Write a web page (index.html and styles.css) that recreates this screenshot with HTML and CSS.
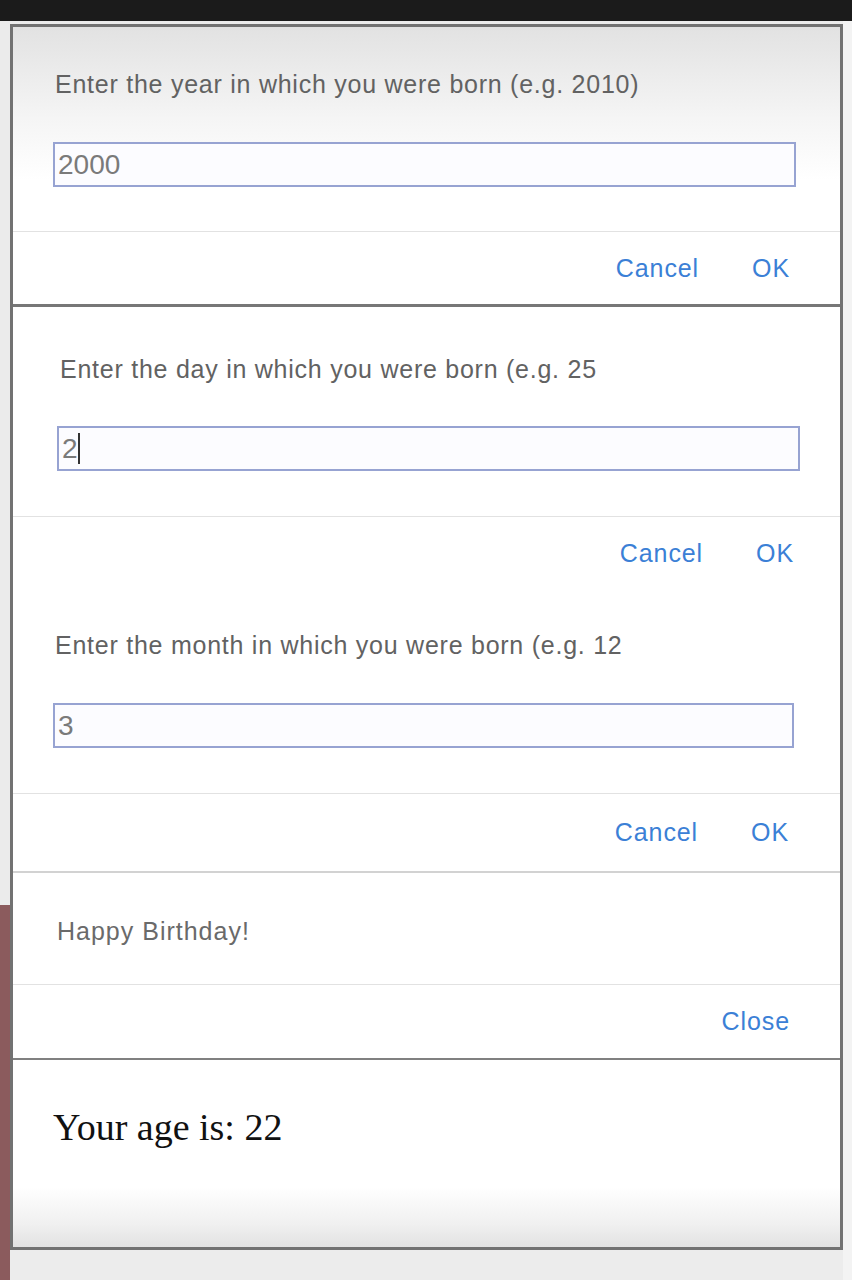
FILE: index.html
```html
<!DOCTYPE html>
<html lang="en">
<head>
<meta charset="utf-8">
<title>Age calculator</title>
<link rel="stylesheet" href="styles.css">
</head>
<body>
<div class="topbar"></div>
<div class="stage">
  <div class="side-left">
    <div class="sl-top"></div>
    <div class="sl-bottom"></div>
  </div>
  <div class="frame">
    <section class="dialog d1">
      <div class="body">
        <p class="msg">Enter the year in which you were born (e.g. 2010)</p>
        <div class="field">2000</div>
      </div>
      <div class="actions">
        <span class="btn">Cancel</span>
        <span class="btn">OK</span>
      </div>
    </section>
    <section class="dialog d2">
      <div class="body">
        <p class="msg">Enter the day in which you were born (e.g. 25</p>
        <div class="field">2<span class="caret"></span></div>
      </div>
      <div class="actions">
        <span class="btn">Cancel</span>
        <span class="btn">OK</span>
      </div>
    </section>
    <section class="dialog d3">
      <div class="body">
        <p class="msg">Enter the month in which you were born (e.g. 12</p>
        <div class="field">3</div>
      </div>
      <div class="actions">
        <span class="btn">Cancel</span>
        <span class="btn">OK</span>
      </div>
    </section>
    <section class="dialog d4">
      <div class="body">
        <p class="msg small">Happy Birthday!</p>
      </div>
      <div class="actions">
        <span class="btn">Close</span>
      </div>
    </section>
    <div class="page">
      <p class="age">Your age is: 22</p>
    </div>
  </div>
  <div class="side-right"></div>
</div>
</body>
</html>
```
FILE: styles.css
```css
* { box-sizing: border-box; }
html, body { margin: 0; padding: 0; }
body {
  width: 852px;
  height: 1280px;
  overflow: hidden;
  background: #ececec;
  font-family: "Liberation Sans", Arial, sans-serif;
}
.topbar {
  height: 21px;
  background: #1b1b1b;
}
.stage {
  display: flex;
  align-items: stretch;
  height: 1259px;
}
.side-left {
  width: 10px;
  display: flex;
  flex-direction: column;
}
.sl-top { height: 884px; background: #ebebeb; }
.sl-bottom { flex: 1; background: #8b5b5d; }
.side-right {
  width: 9px;
  background: #f3f3f3;
}
.frame {
  width: 833px;
  margin-top: 3px;
  align-self: flex-start;
  border: 3px solid #727272;
  background: #fff;
  display: flex;
  flex-direction: column;
}
.dialog { display: flex; flex-direction: column; }
.body { border-bottom: 1px solid #e2e2e2; }
.msg {
  margin: 0;
  font-size: 25px;
  line-height: 26px;
  letter-spacing: 0.75px;
  color: #626262;
  padding-left: 2px;
  white-space: nowrap;
}
.msg.small {
  font-size: 25px;
  letter-spacing: 1px;
  color: #6a6a6a;
}
.field {
  height: 45px;
  border: 2px solid #97a3d2;
  background: #fcfcff;
  color: #7a7a7a;
  font-size: 28px;
  line-height: 41px;
  padding-left: 3px;
  display: flex;
  align-items: center;
}
.caret {
  display: inline-block;
  width: 0;
  height: 31px;
  border-left: 2px solid #333;
}
.actions {
  display: flex;
  justify-content: flex-end;
  align-items: center;
  gap: 53px;
}
.btn {
  font-size: 25px;
  letter-spacing: 0.9px;
  color: #3b80d6;
}
.d1 .body {
  padding: 44px 44px 44px 40px;
  background: linear-gradient(#e2e2e2 0%, #f5f5f5 45%, #ffffff 75%);
}
.d1 .field { margin-top: 45px; }
.d1 .actions { height: 72px; padding-right: 50px; }
.d1 { border-bottom: 3px solid #777; }

.d2 .body { padding: 49px 40px 45px 44px; }
.d2 .msg { padding-left: 3px; }
.d2 .field { margin-top: 44px; }
.d2 .actions { height: 73px; padding-right: 46px; }

.d3 .body { padding: 42px 46px 45px 40px; }
.d3 .field { margin-top: 45px; }
.d3 .actions { height: 77px; padding-right: 51px; }
.d3 { border-bottom: 2px solid #d2d2d2; }

.d4 .body { padding: 45px 44px 40px 42px; }
.d4 .actions { height: 73px; padding-right: 50px; }
.d4 { border-bottom: 2px solid #808080; }

.page {
  height: 187px;
  padding: 46px 40px 0 40px;
  background: linear-gradient(#ffffff 0%, #ffffff 68%, #f0f0f0 88%, #e2e2e2 100%);
}
.age {
  margin: 0;
  font-family: "Liberation Serif", "Times New Roman", serif;
  font-size: 38px;
  line-height: 42px;
  color: #111;
}
```
